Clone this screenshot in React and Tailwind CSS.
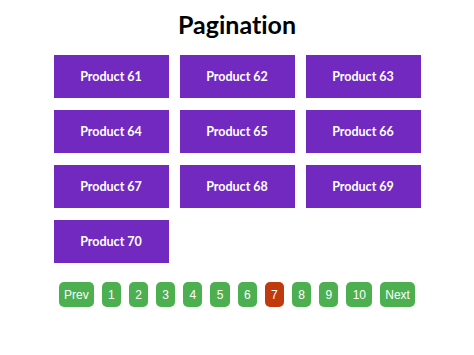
import React from 'react';

const products = [61, 62, 63, 64, 65, 66, 67, 68, 69, 70];
const pages = [1, 2, 3, 4, 5, 6, 7, 8, 9, 10];

const App = () => {
  const current = 7;

  return (
    <div className="w-[474px] h-[355px] bg-white flex flex-col items-center font-['Lato',sans-serif] [font-variant-ligatures:none]">
      <h1 className="mt-[9px] text-[25px] leading-[30px] font-bold text-black">Pagination</h1>

      {/* Product grid */}
      <div className="mt-[16px] grid grid-cols-[115px_115px_115px] gap-x-[11px] gap-y-[12px]">
        {products.map((p) => (
          <div
            key={p}
            className="h-[43px] pt-[2px] bg-[#7129c0] text-white text-[12.5px] font-bold flex items-center justify-center"
          >
            Product {p}
          </div>
        ))}
      </div>

      {/* Pagination controls */}
      <div className="mt-[19px] flex gap-[8px] font-['Liberation_Sans',Arial,sans-serif]">
        <button className="h-[25px] px-[5px] rounded-[5px] bg-[#4caf50] text-white text-[12px]">Prev</button>
        {pages.map((n) => (
          <button
            key={n}
            className={
              n === current
                ? 'h-[25px] px-[6.25px] rounded-[5px] bg-[#bf3a0c] text-white text-[12px]'
                : 'h-[25px] px-[6.25px] rounded-[5px] bg-[#4caf50] text-white text-[12px]'
            }
          >
            {n}
          </button>
        ))}
        <button className="h-[25px] px-[5px] rounded-[5px] bg-[#4caf50] text-white text-[12px]">Next</button>
      </div>
    </div>
  );
};

export default App;
